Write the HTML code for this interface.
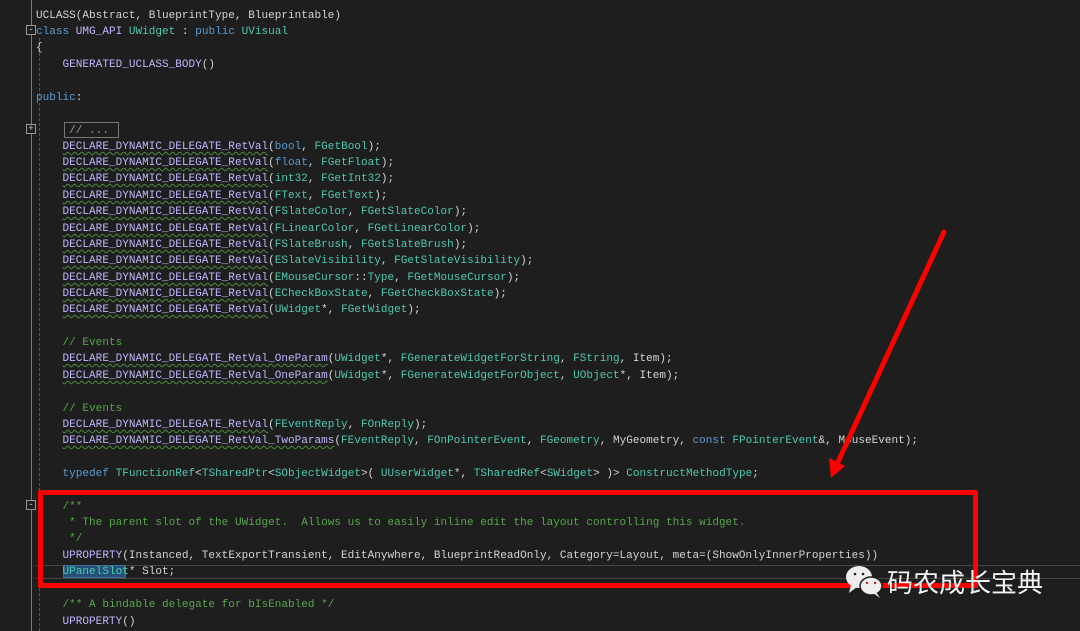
<!DOCTYPE html>
<html><head><meta charset="utf-8"><style>
html,body{margin:0;padding:0;background:#1e1e1e;width:1080px;height:631px;overflow:hidden;position:relative;}
.l{position:absolute;left:36px;margin-top:2px;white-space:pre;font-family:"Liberation Mono","Noto Sans CJK SC",monospace;font-size:11px;line-height:16px;color:#d4d4d4;letter-spacing:0.03px}
.m{color:#beb7ff;text-decoration:underline wavy #4e8a3a;text-decoration-thickness:1px;text-underline-offset:2px;}
.mm{color:#beb7ff;}
.k{color:#569cd6;}
.t{color:#4ec9b0;}
.c{color:#57a64a;}
.g{color:#9a9a9a;}
</style></head><body>
<div style="position:absolute;left:31px;top:0;width:1px;height:631px;background:#7a7a7a"></div>
<div style="position:absolute;left:39px;top:38px;height:593px;border-left:1px dashed #555"></div>
<div style="position:absolute;left:26px;top:25px;width:8px;height:8px;border:1px solid #999;background:#1e1e1e;color:#ccc;font:9px/8px 'Liberation Mono';text-align:center">-</div>
<div style="position:absolute;left:26px;top:124px;width:8px;height:8px;border:1px solid #999;background:#1e1e1e;color:#ccc;font:9px/8px 'Liberation Mono';text-align:center">+</div>
<div style="position:absolute;left:26px;top:500px;width:8px;height:8px;border:1px solid #999;background:#1e1e1e;color:#ccc;font:9px/8px 'Liberation Mono';text-align:center">-</div>
<div style="position:absolute;left:64px;top:122px;width:53px;height:14px;border:1px solid #777"></div>
<div style="position:absolute;left:36px;top:565px;width:1044px;height:12px;border-top:1px solid #464646;border-bottom:1px solid #464646"></div>
<div style="position:absolute;left:63px;top:565px;width:63px;height:13px;background:#264f78;border:1px solid #3a6f9e;box-sizing:border-box"></div>

<div class="l" style="top:6px">UCLASS(Abstract, BlueprintType, Blueprintable)</div>
<div class="l" style="top:22px"><span class="k">class</span> <span class="mm">UMG_API</span> <span class="t">UWidget</span> : <span class="k">public</span> <span class="t">UVisual</span></div>
<div class="l" style="top:38px">{</div>
<div class="l" style="top:55px">    <span class="mm">GENERATED_UCLASS_BODY</span>()</div>
<div class="l" style="top:88px"><span class="k">public</span>:</div>
<div class="l" style="top:121px">    <span class="g"> // ... </span></div>
<div class="l" style="top:137px">    <span class="m">DECLARE_DYNAMIC_DELEGATE_RetVal</span>(<span class="k">bool</span>, <span class="t">FGetBool</span>);</div>
<div class="l" style="top:153px">    <span class="m">DECLARE_DYNAMIC_DELEGATE_RetVal</span>(<span class="k">float</span>, <span class="t">FGetFloat</span>);</div>
<div class="l" style="top:169px">    <span class="m">DECLARE_DYNAMIC_DELEGATE_RetVal</span>(<span class="t">int32</span>, <span class="t">FGetInt32</span>);</div>
<div class="l" style="top:186px">    <span class="m">DECLARE_DYNAMIC_DELEGATE_RetVal</span>(<span class="t">FText</span>, <span class="t">FGetText</span>);</div>
<div class="l" style="top:202px">    <span class="m">DECLARE_DYNAMIC_DELEGATE_RetVal</span>(<span class="t">FSlateColor</span>, <span class="t">FGetSlateColor</span>);</div>
<div class="l" style="top:219px">    <span class="m">DECLARE_DYNAMIC_DELEGATE_RetVal</span>(<span class="t">FLinearColor</span>, <span class="t">FGetLinearColor</span>);</div>
<div class="l" style="top:235px">    <span class="m">DECLARE_DYNAMIC_DELEGATE_RetVal</span>(<span class="t">FSlateBrush</span>, <span class="t">FGetSlateBrush</span>);</div>
<div class="l" style="top:251px">    <span class="m">DECLARE_DYNAMIC_DELEGATE_RetVal</span>(<span class="t">ESlateVisibility</span>, <span class="t">FGetSlateVisibility</span>);</div>
<div class="l" style="top:268px">    <span class="m">DECLARE_DYNAMIC_DELEGATE_RetVal</span>(<span class="t">EMouseCursor</span>::<span class="t">Type</span>, <span class="t">FGetMouseCursor</span>);</div>
<div class="l" style="top:284px">    <span class="m">DECLARE_DYNAMIC_DELEGATE_RetVal</span>(<span class="t">ECheckBoxState</span>, <span class="t">FGetCheckBoxState</span>);</div>
<div class="l" style="top:300px">    <span class="m">DECLARE_DYNAMIC_DELEGATE_RetVal</span>(<span class="t">UWidget</span>*, <span class="t">FGetWidget</span>);</div>
<div class="l" style="top:333px">    <span class="c">// Events</span></div>
<div class="l" style="top:349px">    <span class="m">DECLARE_DYNAMIC_DELEGATE_RetVal_OneParam</span>(<span class="t">UWidget</span>*, <span class="t">FGenerateWidgetForString</span>, <span class="t">FString</span>, Item);</div>
<div class="l" style="top:366px">    <span class="m">DECLARE_DYNAMIC_DELEGATE_RetVal_OneParam</span>(<span class="t">UWidget</span>*, <span class="t">FGenerateWidgetForObject</span>, <span class="t">UObject</span>*, Item);</div>
<div class="l" style="top:399px">    <span class="c">// Events</span></div>
<div class="l" style="top:415px">    <span class="m">DECLARE_DYNAMIC_DELEGATE_RetVal</span>(<span class="t">FEventReply</span>, <span class="t">FOnReply</span>);</div>
<div class="l" style="top:431px">    <span class="m">DECLARE_DYNAMIC_DELEGATE_RetVal_TwoParams</span>(<span class="t">FEventReply</span>, <span class="t">FOnPointerEvent</span>, <span class="t">FGeometry</span>, MyGeometry, <span class="k">const</span> <span class="t">FPointerEvent</span>&amp;, MouseEvent);</div>
<div class="l" style="top:464px">    <span class="k">typedef</span> <span class="t">TFunctionRef</span>&lt;<span class="t">TSharedPtr</span>&lt;<span class="t">SObjectWidget</span>&gt;( <span class="t">UUserWidget</span>*, <span class="t">TSharedRef</span>&lt;<span class="t">SWidget</span>&gt; )&gt; <span class="t">ConstructMethodType</span>;</div>
<div class="l" style="top:497px">    <span class="c">/**</span></div>
<div class="l" style="top:513px">    <span class="c"> * The parent slot of the UWidget.  Allows us to easily inline edit the layout controlling this widget.</span></div>
<div class="l" style="top:529px">    <span class="c"> */</span></div>
<div class="l" style="top:546px">    <span class="mm">UPROPERTY</span>(Instanced, TextExportTransient, EditAnywhere, BlueprintReadOnly, Category=Layout, meta=(ShowOnlyInnerProperties))</div>
<div class="l" style="top:562px">    <span class="t">UPanelSlot</span>* Slot;</div>
<div class="l" style="top:595px">    <span class="c">/** A bindable delegate for bIsEnabled */</span></div>
<div class="l" style="top:612px">    <span class="mm">UPROPERTY</span>()</div>

<div style="position:absolute;left:38px;top:490px;width:940px;height:98px;border:5px solid #ff0000;box-sizing:border-box;border-radius:2px"></div>
<svg style="position:absolute;left:0;top:0" width="1080" height="631">
<line x1="944" y1="232" x2="838" y2="462" stroke="#ff0000" stroke-width="5" stroke-linecap="round"/>
<polygon points="831,478 829,458 845,466" fill="#ff0000"/>
<g fill="#eeeeee">
<ellipse cx="859" cy="577" rx="13" ry="11"/>
<polygon points="851,585 849,593 857,587"/>
<ellipse cx="871" cy="586" rx="11" ry="9" stroke="#1e1e1e" stroke-width="1.5"/>
<polygon points="876,592 880,598 873,593"/>
</g>
<g fill="#1e1e1e"><circle cx="855" cy="574" r="1.3"/><circle cx="863" cy="574" r="1.3"/></g>
<g fill="#cc2222"><circle cx="867" cy="583" r="1.2"/><circle cx="875" cy="583" r="1.2"/></g>
</svg>
<div style="position:absolute;left:887px;top:566px;font-family:'Noto Sans CJK SC',sans-serif;font-size:26px;line-height:32px;color:#f4f4f4;letter-spacing:0px">码农成长宝典</div>
</body></html>
